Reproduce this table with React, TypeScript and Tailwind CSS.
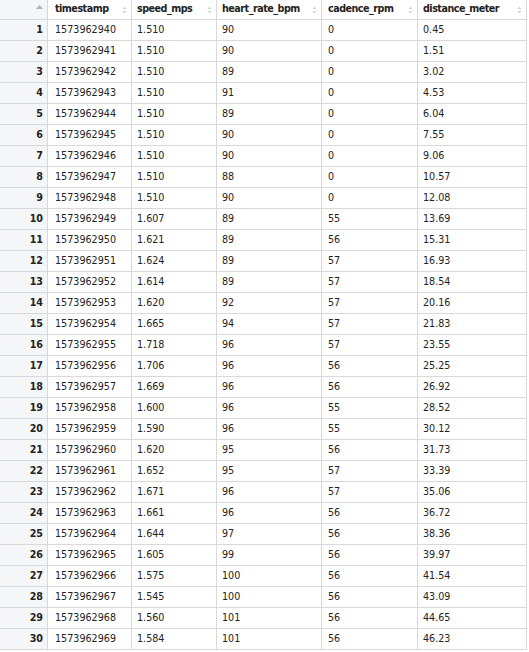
import React from "react";

const columns = [
  { key: "timestamp", width: "w-[84px]", pad: "pl-[7px]" },
  { key: "speed_mps", width: "w-[85px]", pad: "pl-[5px]" },
  { key: "heart_rate_bpm", width: "w-[105px]", pad: "pl-[5px]" },
  { key: "cadence_rpm", width: "w-[96px]", pad: "pl-[6px]" },
  { key: "distance_meter", width: "w-[109px]", pad: "pl-[5px]" },
];

const rows: string[][] = [
  ["1573962940", "1.510", "90", "0", "0.45"],
  ["1573962941", "1.510", "90", "0", "1.51"],
  ["1573962942", "1.510", "89", "0", "3.02"],
  ["1573962943", "1.510", "91", "0", "4.53"],
  ["1573962944", "1.510", "89", "0", "6.04"],
  ["1573962945", "1.510", "90", "0", "7.55"],
  ["1573962946", "1.510", "90", "0", "9.06"],
  ["1573962947", "1.510", "88", "0", "10.57"],
  ["1573962948", "1.510", "90", "0", "12.08"],
  ["1573962949", "1.607", "89", "55", "13.69"],
  ["1573962950", "1.621", "89", "56", "15.31"],
  ["1573962951", "1.624", "89", "57", "16.93"],
  ["1573962952", "1.614", "89", "57", "18.54"],
  ["1573962953", "1.620", "92", "57", "20.16"],
  ["1573962954", "1.665", "94", "57", "21.83"],
  ["1573962955", "1.718", "96", "57", "23.55"],
  ["1573962956", "1.706", "96", "56", "25.25"],
  ["1573962957", "1.669", "96", "56", "26.92"],
  ["1573962958", "1.600", "96", "55", "28.52"],
  ["1573962959", "1.590", "96", "55", "30.12"],
  ["1573962960", "1.620", "95", "56", "31.73"],
  ["1573962961", "1.652", "95", "57", "33.39"],
  ["1573962962", "1.671", "96", "57", "35.06"],
  ["1573962963", "1.661", "96", "56", "36.72"],
  ["1573962964", "1.644", "97", "56", "38.36"],
  ["1573962965", "1.605", "99", "56", "39.97"],
  ["1573962966", "1.575", "100", "56", "41.54"],
  ["1573962967", "1.545", "100", "56", "43.09"],
  ["1573962968", "1.560", "101", "56", "44.65"],
  ["1573962969", "1.584", "101", "56", "46.23"],
];

const SortIcon = () => (
  <svg width="5" height="8" viewBox="0 0 5 8" className="shrink-0">
    <path d="M2.5 0.5 L4.5 3 L0.5 3 Z" fill="#d4d4d4" />
    <path d="M2.5 7.5 L4.5 5 L0.5 5 Z" fill="#d4d4d4" />
  </svg>
);

const App: React.FC = () => {
  return (
    <div className="w-[529px] h-[652px] overflow-hidden bg-white font-['DejaVu_Sans',sans-serif] text-[9.6px] text-[#222]">
      <div className="w-[527px]">
        {/* Header */}
        <div className="flex h-[20px] border-b border-[#d9d9d9]">
          <div className="w-[48px] shrink-0 bg-[#f5f6f8] border-r border-[#d9d9d9] flex items-start justify-end pr-[4px] pt-[5px]">
            <svg width="7" height="4" viewBox="0 0 7 4">
              <path d="M3.5 0 L7 4 L0 4 Z" fill="#a8b4c2" />
            </svg>
          </div>
          {columns.map((c) => (
            <div
              key={c.key}
              className={`${c.width} ${c.pad} shrink-0 border-r border-[#d9d9d9] flex items-center justify-between pr-[4px]`}
            >
              <span className="font-bold tracking-[-0.5px]">{c.key}</span>
              <SortIcon />
            </div>
          ))}
        </div>

        {/* Rows */}
        {rows.map((r, i) => (
          <div key={i} className="flex h-[21px] border-b border-[#d9d9d9]">
            <div className="w-[48px] shrink-0 bg-[#f5f6f8] border-r border-[#d9d9d9] flex items-center justify-end pr-[4px] font-bold">
              {i + 1}
            </div>
            {r.map((v, j) => (
              <div
                key={j}
                className={`${columns[j].width} ${columns[j].pad} shrink-0 border-r border-[#d9d9d9] flex items-center`}
              >
                {v}
              </div>
            ))}
          </div>
        ))}
      </div>
    </div>
  );
};

export default App;
